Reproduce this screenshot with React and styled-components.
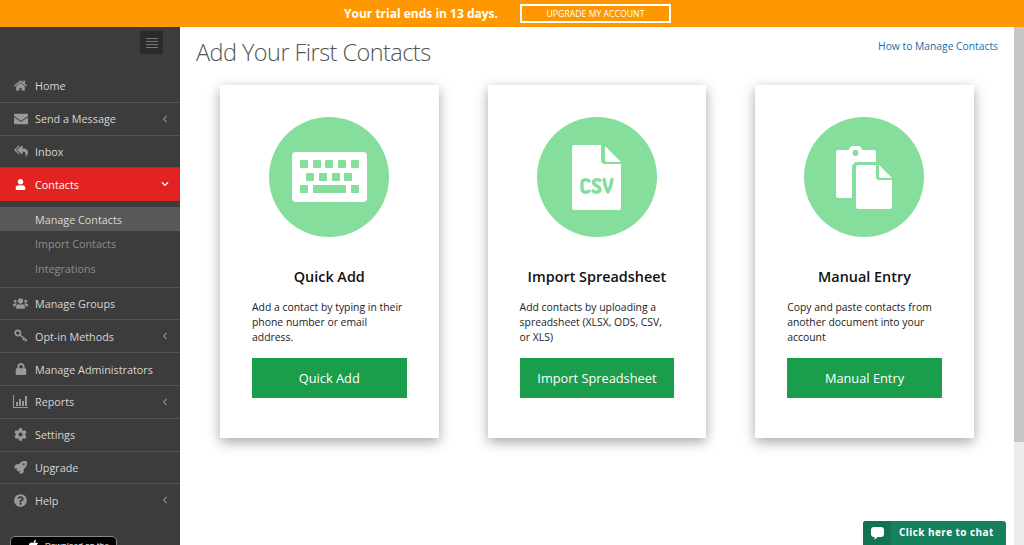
import React from "react";
import styled, { createGlobalStyle } from "styled-components";
import { FaHome, FaEnvelope, FaReplyAll, FaUser, FaUsers, FaLock, FaCog, FaRocket, FaQuestionCircle, FaChevronLeft, FaChevronDown, FaApple } from "react-icons/fa";

const Global = createGlobalStyle`
  html, body { margin: 0; padding: 0; height: 545px; overflow: hidden; background: #fff; }
  * { box-sizing: border-box; }
  body { font-family: "Open Sans", "Liberation Sans", sans-serif; }
`;
const Page = styled.div`
  width: 1024px; height: 545px; display: flex; flex-direction: column; overflow: hidden;
`;
const Banner = styled.div`
  height: 27px; flex: none; background: #ff9800; display: flex; align-items: center; justify-content: center;
  padding-right: 9px; gap: 22px; color: #fff;
`;
const BannerText = styled.span`
  font-size: 12px; font-weight: 700;
`;
const UpgradeButton = styled.span`
  width: 151px; height: 19px; border: 2px solid #fff; font-size: 8.7px; display: flex; align-items: center; justify-content: center;
`;
const Body = styled.div`
  flex: 1; display: flex; min-height: 0;
`;
const Sidebar = styled.nav`
  width: 180px; flex: none; background: #3c3c3c; display: flex; flex-direction: column; overflow: hidden;
`;
const ToggleRow = styled.div`
  height: 43px; flex: none; display: flex; justify-content: flex-end; align-items: flex-start; padding: 4px 17px 0 0;
`;
const Toggle = styled.div`
  width: 23px; height: 23px; background: #2b2b2b; display: flex; flex-direction: column; align-items: center; justify-content: center; gap: 2px;
  span { width: 12px; height: 1px; background: #777; }
`;
const MenuItem = styled.div`
  height: 32.8px; flex: none; display: flex; align-items: center; padding-left: 13px;
  background: ${p => p.$active ? "#e32322" : "transparent"};
  color: ${p => p.$active ? "#fff" : "#d6d6d6"};
  border-bottom: 1px solid ${p => p.$active || p.$last ? "transparent" : "#555"};
  font-size: 10.8px;
`;
const IconSlot = styled.span`
  width: 22px; flex: none; display: flex; align-items: center; justify-content: center; padding-right: 7px; color: ${p => p.$active ? "#fff" : "#999"}; font-size: 13px;
`;
const Label = styled.span`
  flex: 1;
`;
const Caret = styled.span`
  width: 19px; flex: none; font-size: 8px; color: ${p => p.$active ? "#fff" : "#888"}; display: flex; align-items: center;
`;
const SubMenu = styled.div`
  height: 86.4px; flex: none; padding-top: 6px; display: flex; flex-direction: column; border-bottom: 1px solid #555;
`;
const SubItem = styled.div`
  height: ${p => p.$current ? "24px" : "25px"}; flex: none; display: flex; align-items: center; padding-left: 35px; font-size: 10.8px;
  color: ${p => p.$current ? "#d8d8d8" : "#8c8c8c"};
  background: ${p => p.$current ? "#585858" : "transparent"};
`;
const StoreBadge = styled.div`
  margin: 19px 0 0 10px; width: 107px; height: 30px; flex: none; background: #000; border: 1px solid #888; border-radius: 5px;
  color: #fff; font-size: 8px; display: flex; align-items: flex-start; padding: 2px 0 0 16px; gap: 5px;
`;
const Main = styled.main`
  flex: 1; min-width: 0; padding: 10px 16px 0 16px; position: relative;
`;
const Header = styled.header`
  display: flex; justify-content: space-between; align-items: flex-start;
`;
const Title = styled.h1`
  margin: 0; font-size: 23.5px; line-height: 30px; font-weight: 300; color: #555; letter-spacing: -0.55px;
`;
const HelpLink = styled.a`
  font-size: 10.3px; color: #1a6f9f; margin-top: 2px; line-height: 14px;
`;
const Cards = styled.div`
  display: grid; grid-template-columns: repeat(3, 218.6px); column-gap: 49px; margin: 18px 0 0 24px;
`;
const Card = styled.article`
  height: 353px; background: #fff; box-shadow: 0 4px 12px rgba(0,0,0,.35); padding: 32px 32px 0; display: flex; flex-direction: column; align-items: center;
`;
const Circle = styled.div`
  width: 120px; height: 120px; border-radius: 50%; background: #85de9b; flex: none; display: flex; align-items: center; justify-content: center;
`;
const CardTitle = styled.h2`
  margin: 30px 0 0; font-size: 14.4px; line-height: 20px; font-weight: 600; color: #111; text-align: center;
`;
const CardText = styled.p`
  margin: 13px 0 0; width: 100%; height: 45px; font-size: 10.4px; line-height: 15px; color: #222;
`;
const CardButton = styled.div`
  margin-top: 13px; width: 100%; height: 40px; background: #1a9e4b; color: #fff; font-size: 12.8px; display: flex; align-items: center; justify-content: center;
`;
const Scrollbar = styled.div`
  width: 10px; flex: none; background: #ececec;
`;
const Thumb = styled.div`
  height: 415px; background: #c6c6c6;
`;
const Chat = styled.div`
  position: absolute; right: 8px; bottom: 0; width: 143px; height: 24px; background: #16825d; border-radius: 3px 3px 0 0; display: flex; align-items: center; color: #fff; font-size: 10px; font-weight: 700; letter-spacing: .42px; overflow: hidden;
`;
const ChatIcon = styled.span`
  width: 28px; height: 100%; background: #127253; display: flex; align-items: center; justify-content: center; margin-right: 8px;
`;
const ChatLabel = styled.span`
  margin-bottom: 2px;
`;

const KeyboardIcon = () => (
  <svg width="75" height="50" viewBox="0 0 75 50" fill="#fff" aria-hidden="true">
    <path fillRule="evenodd" d="M4 0h67a4 4 0 0 1 4 4v42a4 4 0 0 1-4 4H4a4 4 0 0 1-4-4V4a4 4 0 0 1 4-4ZM9 8a1 1 0 0 0-1 1v6a1 1 0 0 0 1 1h6a1 1 0 0 0 1-1V9a1 1 0 0 0-1-1ZM22 8a1 1 0 0 0-1 1v6a1 1 0 0 0 1 1h6a1 1 0 0 0 1-1V9a1 1 0 0 0-1-1ZM34 8a1 1 0 0 0-1 1v6a1 1 0 0 0 1 1h6a1 1 0 0 0 1-1V9a1 1 0 0 0-1-1ZM47 8a1 1 0 0 0-1 1v6a1 1 0 0 0 1 1h6a1 1 0 0 0 1-1V9a1 1 0 0 0-1-1ZM60 8a1 1 0 0 0-1 1v6a1 1 0 0 0 1 1h6a1 1 0 0 0 1-1V9a1 1 0 0 0-1-1ZM15 21a1 1 0 0 0-1 1v6a1 1 0 0 0 1 1h6a1 1 0 0 0 1-1v-6a1 1 0 0 0-1-1ZM28 21a1 1 0 0 0-1 1v6a1 1 0 0 0 1 1h6a1 1 0 0 0 1-1v-6a1 1 0 0 0-1-1ZM41 21a1 1 0 0 0-1 1v6a1 1 0 0 0 1 1h6a1 1 0 0 0 1-1v-6a1 1 0 0 0-1-1ZM53 21a1 1 0 0 0-1 1v6a1 1 0 0 0 1 1h6a1 1 0 0 0 1-1v-6a1 1 0 0 0-1-1ZM9 33a1 1 0 0 0-1 1v6a1 1 0 0 0 1 1h6a1 1 0 0 0 1-1v-6a1 1 0 0 0-1-1ZM22 33a1 1 0 0 0-1 1v6a1 1 0 0 0 1 1h31a1 1 0 0 0 1-1v-6a1 1 0 0 0-1-1ZM60 33a1 1 0 0 0-1 1v6a1 1 0 0 0 1 1h6a1 1 0 0 0 1-1v-6a1 1 0 0 0-1-1Z"/>
  </svg>
);
const CsvIcon = () => (
  <svg width="49" height="65" viewBox="0 0 49 65" fill="#fff" aria-hidden="true">
    <path d="M2 0h27v15a4 4 0 0 0 4 4h16v44a2 2 0 0 1-2 2H2a2 2 0 0 1-2-2V2a2 2 0 0 1 2-2Z"/>
    <path d="M33 1l16 16H35a2 2 0 0 1-2-2Z"/>
    <g fill="none" stroke="#85de9b" strokeWidth="3.4" strokeLinecap="round" strokeLinejoin="round">
      <path d="M17 36c-2-2-7-1.500-7 2v6c0 3.500 5 4 7 2"/>
      <path d="M28 35.500c-2-1.500-6.500-1-6.500 2 0 3.500 6.500 3 6.500 7 0 3-5 3.500-7 1.500"/>
      <path d="M32 34.500c.5 4 2 9 4 12.500 2-3.500 3.500-8.500 4-12.500"/>
    </g>
  </svg>
);
const PasteIcon = () => (
  <svg width="56" height="63" viewBox="0 0 56 63" fill="#fff" aria-hidden="true">
    <path fillRule="evenodd" d="M2 4h10.500a7.500 7.500 0 0 1 14 0H38a2 2 0 0 1 2 2v10H21a5 5 0 0 0-5 5v31H2a2 2 0 0 1-2-2V6a2 2 0 0 1 2-2ZM19.500 4a3 3 0 1 0 0 6 3 3 0 0 0 0-6Z"/>
    <path d="M22 19h18v12a3 3 0 0 0 3 3h13v27a2 2 0 0 1-2 2H22a2 2 0 0 1-2-2V21a2 2 0 0 1 2-2Z"/>
    <path d="M43 19l13 13H45a2 2 0 0 1-2-2Z"/>
  </svg>
);
const KeyIcon = () => (
  <svg width="14" height="14" viewBox="0 0 14 14" fill="none" stroke="#999" aria-hidden="true">
    <circle cx="3.800" cy="4" r="2.600" strokeWidth="1.700" />
    <path d="M6 6l7 5.500M10 9.200l-1.200 1.800M12 10.800l-1 1.600" strokeWidth="1.500" />
  </svg>
);
const ReportIcon = () => (
  <svg width="15" height="13" viewBox="0 0 15 13" fill="#999" aria-hidden="true">
    <path d="M0 0h1v12h14v1H0Z" />
    <path d="M3 7h2v4H3ZM6 4h2v7H6ZM9 6h2v5H9ZM12 1h2v10h-2Z" />
  </svg>
);
const BubbleIcon = () => (
  <svg width="13" height="13" viewBox="0 0 13 13" fill="#fff" aria-hidden="true">
    <path d="M3 0h7a3 3 0 0 1 3 3v4a3 3 0 0 1-3 3H6.500L3.500 12.800V10H3a3 3 0 0 1-3-3V3a3 3 0 0 1 3-3Z" />
  </svg>
);

const topItems = [
  { label: "Send a Message", icon: <FaEnvelope size={14} />, caret: true },
  { label: "Inbox", icon: <FaReplyAll size={14} /> },
];
const lowerItems = [
  { label: "Manage Groups", icon: <FaUsers size={15} /> },
  { label: "Opt-in Methods", icon: <KeyIcon />, caret: true },
  { label: "Manage Administrators", icon: <FaLock size={12} /> },
  { label: "Reports", icon: <ReportIcon />, caret: true },
  { label: "Settings", icon: <FaCog /> },
  { label: "Upgrade", icon: <FaRocket /> },
  { label: "Help", icon: <FaQuestionCircle />, caret: true, last: true },
];
const cards = [
  { title: "Quick Add", text: "Add a contact by typing in their phone number or email address.", icon: <KeyboardIcon /> },
  { title: "Import Spreadsheet", text: "Add contacts by uploading a spreadsheet (XLSX, ODS, CSV, or XLS)", icon: <CsvIcon /> },
  { title: "Manual Entry", text: "Copy and paste contacts from another document into your account", icon: <PasteIcon /> },
];

const Item = ({ item }) => (
  <MenuItem $last={item.last}>
    <IconSlot>{item.icon}</IconSlot>
    <Label>{item.label}</Label>
    {item.caret && <Caret><FaChevronLeft /></Caret>}
  </MenuItem>
);

export default function App() {
  return (
    <Page>
      <Global />
      <Banner>
        <BannerText>Your trial ends in 13 days.</BannerText>
        <UpgradeButton>UPGRADE MY ACCOUNT</UpgradeButton>
      </Banner>
      <Body>
        <Sidebar>
          <ToggleRow><Toggle><span /><span /><span /><span /></Toggle></ToggleRow>
          <MenuItem><IconSlot><FaHome /></IconSlot><Label>Home</Label></MenuItem>
          {topItems.map(i => <Item key={i.label} item={i} />)}
          <MenuItem $active>
            <IconSlot $active><FaUser size={11} /></IconSlot>
            <Label>Contacts</Label>
            <Caret $active><FaChevronDown /></Caret>
          </MenuItem>
          <SubMenu>
            <SubItem $current>Manage Contacts</SubItem>
            <SubItem>Import Contacts</SubItem>
            <SubItem>Integrations</SubItem>
          </SubMenu>
          {lowerItems.map(i => <Item key={i.label} item={i} />)}
          <StoreBadge><FaApple size={13} /><span>Download on the</span></StoreBadge>
        </Sidebar>
        <Main>
          <Header>
            <Title>Add Your First Contacts</Title>
            <HelpLink>How to Manage Contacts</HelpLink>
          </Header>
          <Cards>
            {cards.map(c => (
              <Card key={c.title}>
                <Circle>{c.icon}</Circle>
                <CardTitle>{c.title}</CardTitle>
                <CardText>{c.text}</CardText>
                <CardButton>{c.title}</CardButton>
              </Card>
            ))}
          </Cards>
          <Chat><ChatIcon><BubbleIcon /></ChatIcon><ChatLabel>Click here to chat</ChatLabel></Chat>
        </Main>
        <Scrollbar><Thumb /></Scrollbar>
      </Body>
    </Page>
  );
}
